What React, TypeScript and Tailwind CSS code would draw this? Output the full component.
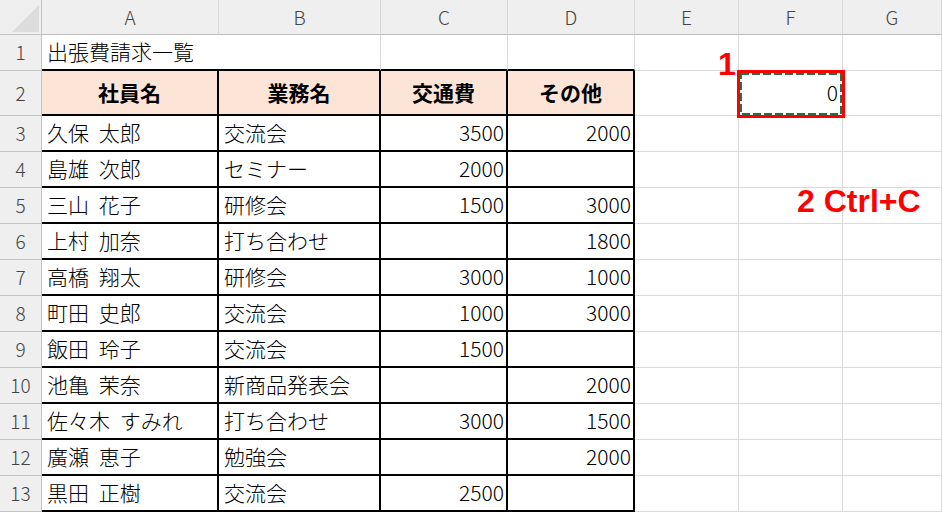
import React from "react";

const cols = ["A", "B", "C", "D", "E", "F", "G"];

const rows = [
  ["久保 太郎", "交流会", "3500", "2000"],
  ["島雄 次郎", "セミナー", "2000", ""],
  ["三山 花子", "研修会", "1500", "3000"],
  ["上村 加奈", "打ち合わせ", "", "1800"],
  ["高橋 翔太", "研修会", "3000", "1000"],
  ["町田 史郎", "交流会", "1000", "3000"],
  ["飯田 玲子", "交流会", "1500", ""],
  ["池亀 茉奈", "新商品発表会", "", "2000"],
  ["佐々木 すみれ", "打ち合わせ", "3000", "1500"],
  ["廣瀬 恵子", "勉強会", "", "2000"],
  ["黒田 正樹", "交流会", "2500", ""],
];

const grid = "border-r border-b border-[#dadada]";
const boxed = "border-r-2 border-b-2 border-black";

function RowHead({ n }: { n: number }) {
  return (
    <div className="flex items-center justify-center border-r border-b border-[#c4c4c4] bg-[#efefef] text-[19px] font-light text-[#444]">
      {n}
    </div>
  );
}

function Empty({ extra = "" }: { extra?: string }) {
  return <div className={`${grid} ${extra}`} />;
}

export default function App() {
  return (
    <div className="relative h-[513px] w-[942px] overflow-hidden bg-white font-['Noto_Sans_CJK_JP','Noto_Sans',sans-serif] font-light text-black">
      <div className="grid grid-cols-[42px_177px_162px_127px_127px_104px_104px_1fr] grid-rows-[35px_36px_45px_repeat(11,36px)]">
        {/* column headers */}
        <div className="relative border-r border-b border-[#c4c4c4] bg-[#efefef]">
          <svg width="42" height="35" className="absolute left-0 top-0">
            <polygon points="39,5 39,32 12,32" fill="#dcdcdc" />
          </svg>
        </div>
        {cols.map((c) => (
          <div
            key={c}
            className="flex items-center justify-center border-r border-b border-r-[#d6d6d6] border-b-[#bdbdbd] bg-[#efefef] text-[19px] text-[#444]"
          >
            {c}
          </div>
        ))}

        {/* row 1 */}
        <RowHead n={1} />
        <div className="flex items-center border-b-2 border-black pl-[5px] text-[21px]">
          出張費請求一覧
        </div>
        <Empty extra="!border-b-2 !border-b-black" />
        <Empty extra="!border-b-2 !border-b-black" />
        <Empty extra="!border-b-2 !border-b-black" />
        <Empty />
        <Empty />
        <Empty />

        {/* row 2 */}
        <RowHead n={2} />
        {["社員名", "業務名", "交通費", "その他"].map((h) => (
          <div
            key={h}
            className={`flex items-center justify-center bg-[#fce4d6] text-[21px] font-bold ${boxed}`}
          >
            {h}
          </div>
        ))}
        <Empty />
        <div className={`flex items-center justify-end pr-[4px] text-[21px] ${grid}`}>0</div>
        <Empty />

        {/* data rows */}
        {rows.map((r, i) => (
          <React.Fragment key={i}>
            <RowHead n={i + 3} />
            <div className={`flex items-center pl-[5px] text-[21px] [word-spacing:5px] ${boxed}`}>{r[0]}</div>
            <div className={`flex items-center pl-[5px] text-[21px] ${boxed}`}>{r[1]}</div>
            <div className={`flex items-center justify-end pr-[2px] text-[21px] ${boxed}`}>{r[2]}</div>
            <div className={`flex items-center justify-end pr-[2px] text-[21px] ${boxed}`}>{r[3]}</div>
            <Empty />
            <Empty />
            <Empty />
          </React.Fragment>
        ))}
      </div>

      {/* copied cell F2 */}
      <div className="absolute left-[737px] top-[70px] h-[48px] w-[108px] border-[3px] border-[#ff0000]">
        <svg width="102" height="42" className="absolute left-0 top-0">
          <rect x="1" y="1" width="100" height="40" fill="none" stroke="#217346" strokeWidth="2" strokeDasharray="8 3" />
        </svg>
      </div>

      {/* annotations */}
      <div className="absolute left-[718px] top-[48px] font-['Liberation_Sans',Arial,sans-serif] text-[32px] leading-[32px] font-bold text-[#ff0000]">
        1
      </div>
      <div className="absolute left-[797px] top-[185px] font-['Liberation_Sans',Arial,sans-serif] text-[32px] leading-[32px] font-bold text-[#ff0000]">
        2 Ctrl+C
      </div>
    </div>
  );
}
